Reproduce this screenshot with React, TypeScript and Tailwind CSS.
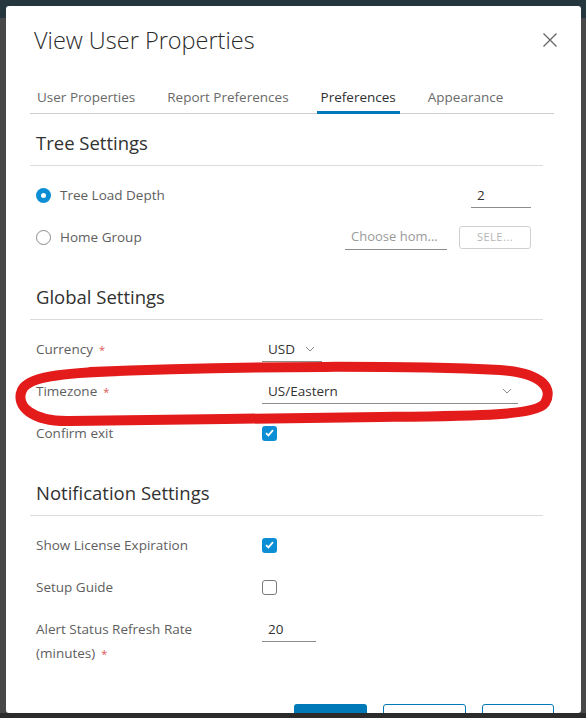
import React from "react";

const font = { fontFamily: "'Open Sans', Lato, 'Liberation Sans', sans-serif" };

function Chevron() {
  return (
    <svg width="10" height="6" viewBox="0 0 10 6" className="shrink-0">
      <path d="M1 1 L5 5 L9 1" fill="none" stroke="#8a8a8a" strokeWidth="1" />
    </svg>
  );
}

function CheckBox({ checked }: { checked: boolean }) {
  return checked ? (
    <div className="flex h-[15px] w-[15px] items-center justify-center rounded-[3px] bg-[#0b8ed4]">
      <svg width="9" height="8" viewBox="0 0 9 8">
        <path d="M1 4.2 L3.4 6.4 L8 1.2" fill="none" stroke="#fff" strokeWidth="1.8" />
      </svg>
    </div>
  ) : (
    <div className="h-[15px] w-[15px] rounded-[3px] border border-[#7a7a7a] bg-white" />
  );
}

function Radio({ checked }: { checked: boolean }) {
  return checked ? (
    <div className="flex h-[15px] w-[15px] items-center justify-center rounded-full bg-[#0b8ed4]">
      <div className="h-[5px] w-[5px] rounded-full bg-white" />
    </div>
  ) : (
    <div className="h-[15px] w-[15px] rounded-full border border-[#8a8a8a] bg-white" />
  );
}

function Req() {
  return <span className="ml-[6px] text-[11px] text-[#e05555]">*</span>;
}

function Heading({ children }: { children: React.ReactNode }) {
  return (
    <div className="border-b border-[#dcdcdc] pb-[10px] pl-[6px] text-[18.5px] leading-[24px] text-[#313131]">
      {children}
    </div>
  );
}

function Row({ label, children }: { label: React.ReactNode; children?: React.ReactNode }) {
  return (
    <div className="flex h-[42px] items-center pl-[6px]">
      <div className="w-[226px] text-[13.5px] text-[#5e5e5e]">{label}</div>
      {children}
    </div>
  );
}

export default function App() {
  const tabs = ["User Properties", "Report Preferences", "Preferences", "Appearance"];
  return (
    <div
      className="relative h-[718px] w-[586px] overflow-hidden bg-[linear-gradient(to_bottom,#26363f_0px,#26363f_18px,#484848_18px,#484848_713px,#2b2b2b_713px)] pl-[6px] pt-[6px]"
      style={font}
    >
      <div className="h-[707px] w-[575px] overflow-hidden rounded-[3px] bg-white pl-[24px] pr-[27px] pt-[19px]">
        {/* dialog header */}
        <div className="flex items-center justify-between pl-[4px]">
          <div className="text-[23.5px] font-light leading-[30px] text-[#2a2a2a]">View User Properties</div>
          <svg width="16" height="16" viewBox="0 0 16 16" className="mr-[-4px]">
            <path d="M1.5 1.5 L14.5 14.5 M14.5 1.5 L1.5 14.5" stroke="#666" strokeWidth="1.3" />
          </svg>
        </div>

        {/* tabs */}
        <div className="mt-[32px] flex gap-[24px] border-b border-[#cfcfcf] pl-[3px]">
          {tabs.map((t) => (
            <div
              key={t}
              className={
                t === "Preferences"
                  ? "mb-[-1px] border-b-[3px] border-[#0079b8] px-[4px] pb-[4px] text-[13.5px] leading-[20px] text-[#313131]"
                  : "mb-[-1px] border-b-[3px] border-transparent px-[4px] pb-[4px] text-[13.5px] leading-[20px] text-[#6a6a6a]"
              }
            >
              {t}
            </div>
          ))}
        </div>

        <div className="w-[513px]">
          {/* tree settings */}
          <div className="mt-[17px]">
            <Heading>Tree Settings</Heading>
          </div>
          <div className="mt-[8px] flex h-[42px] items-center pl-[6px]">
            <Radio checked />
            <span className="ml-[9px] text-[13.5px] text-[#5e5e5e]">Tree Load Depth</span>
            <div className="ml-auto mr-[12px] mt-[1px] flex h-[24px] w-[60px] items-center border-b border-[#8c8c8c] pl-[6px] text-[13.5px] text-[#333]">
              2
            </div>
          </div>
          <div className="flex h-[42px] items-center pl-[6px]">
            <Radio checked={false} />
            <span className="ml-[9px] text-[13.5px] text-[#5e5e5e]">Home Group</span>
            <div className="ml-auto mt-[1px] flex h-[24px] w-[102px] items-center overflow-hidden whitespace-nowrap border-b border-[#8c8c8c] pl-[6px] text-[13px] text-[#9a9a9a]">
              Choose hom...
            </div>
            <div className="ml-[12px] mr-[12px] flex h-[23px] w-[72px] items-center justify-center rounded-[3px] border border-[#d0d0d0] text-[11px] tracking-[0.5px] text-[#b5b5b5]">
              SELE...
            </div>
          </div>

          {/* global settings */}
          <div className="mt-[27px]">
            <Heading>Global Settings</Heading>
          </div>
          <div className="mt-[8px]">
            <Row
              label={
                <>
                  Currency<Req />
                </>
              }
            >
              <div className="mt-[1px] flex h-[24px] w-[60px] items-center justify-between border-b border-[#8c8c8c] pl-[6px] pr-[7px] text-[13.5px] text-[#333]">
                USD
                <Chevron />
              </div>
            </Row>
            <Row
              label={
                <>
                  Timezone<Req />
                </>
              }
            >
              <div className="mt-[1px] flex h-[24px] w-[256px] items-center justify-between border-b border-[#8c8c8c] pl-[6px] pr-[6px] text-[13.5px] text-[#333]">
                US/Eastern
                <Chevron />
              </div>
            </Row>
            <Row label="Confirm exit">
              <CheckBox checked />
            </Row>
          </div>

          {/* notification settings */}
          <div className="mt-[27px]">
            <Heading>Notification Settings</Heading>
          </div>
          <div className="mt-[8px]">
            <Row label="Show License Expiration">
              <CheckBox checked />
            </Row>
            <Row label="Setup Guide">
              <CheckBox checked={false} />
            </Row>
            <div className="flex pl-[6px] pt-[9px]">
              <div className="w-[226px] text-[13.5px] leading-[24px] text-[#5e5e5e]">
                Alert Status Refresh Rate
                <br />
                (minutes)
                <Req />
              </div>
              <div className="flex h-[25px] w-[54px] items-center border-b border-[#8c8c8c] pl-[6px] text-[13.5px] text-[#333]">
                20
              </div>
            </div>
          </div>
        </div>

        {/* footer buttons */}
        <div className="mt-[38px] flex justify-end gap-[16px]">
          <div className="h-[36px] w-[73px] rounded-[3px] bg-[#0079b8]" />
          <div className="h-[36px] w-[83px] rounded-[3px] border border-[#0079b8] bg-white" />
          <div className="h-[36px] w-[72px] rounded-[3px] border border-[#0079b8] bg-white" />
        </div>
      </div>

      {/* hand-drawn red marker around the timezone row */}
      <svg className="pointer-events-none absolute left-0 top-0" width="586" height="718" viewBox="0 0 586 718">
        <path
          d="M90 372 C 250 365, 420 366, 500 370 C 545 373, 553 390, 545 403 C 536 416, 470 416, 380 417 C 280 418, 170 420, 70 421 C 32 422, 15 406, 22 390 C 28 377, 60 373, 120 371"
          fill="none"
          stroke="#e41b1b"
          strokeWidth="10"
          strokeLinecap="round"
          strokeLinejoin="round"
        />
      </svg>
    </div>
  );
}
